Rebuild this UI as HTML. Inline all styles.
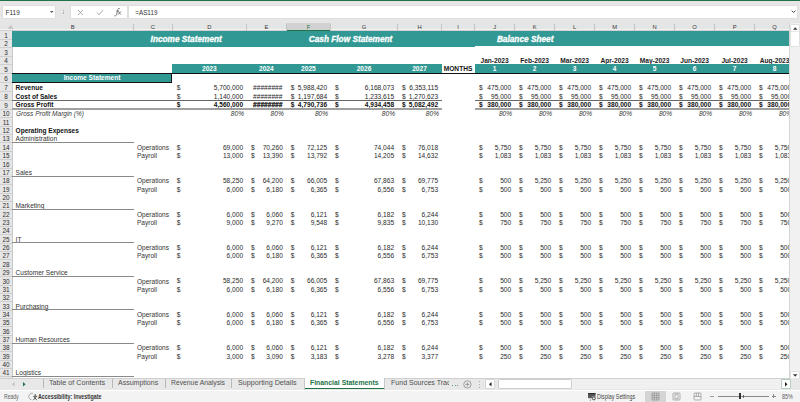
<!DOCTYPE html><html><head><meta charset="utf-8"><style>
html,body{margin:0;padding:0;}
body{width:800px;height:402px;overflow:hidden;position:relative;background:#fff;font-family:"Liberation Sans",sans-serif;color:#262626;}
.t{position:absolute;white-space:nowrap;line-height:10px;}
.r{position:absolute;}
#grid{position:absolute;left:0;top:0;width:789.3px;height:378px;overflow:hidden;}
</style></head><body>
<div class="r" style="left:0.00px;top:0.00px;width:800.00px;height:23.00px;background:#e6e6e6;"></div>
<div class="r" style="left:0.00px;top:0.00px;width:800.00px;height:1.00px;background:#217346;"></div>
<div class="r" style="left:3.00px;top:5.50px;width:52.00px;height:12.70px;background:#fff;border-radius:1px;box-shadow:0 0 0 0.5px #d6d6d6;"></div>
<div class="t" style="top:7.85px;font-size:6.500px;color:#333;left:5.50px;">F119</div>
<svg style="position:absolute;left:49.5px;top:11px" width="4" height="3"><path d="M0 0H3.5L1.75 2Z" fill="#555"/></svg>
<div class="r" style="left:62.70px;top:10.20px;width:0.80px;height:0.70px;background:#b0b0b0;"></div>
<div class="r" style="left:62.70px;top:11.80px;width:0.80px;height:0.70px;background:#b0b0b0;"></div>
<div class="r" style="left:62.70px;top:13.40px;width:0.80px;height:0.70px;background:#b0b0b0;"></div>
<div class="r" style="left:70.60px;top:5.50px;width:56.90px;height:12.50px;background:#fff;box-shadow:0 0 0 0.5px #d6d6d6;"></div>
<svg style="position:absolute;left:77px;top:8.5px" width="7" height="7"><path d="M1 1L6 6M6 1L1 6" stroke="#8a8a8a" stroke-width="0.7"/></svg>
<svg style="position:absolute;left:95.5px;top:8.5px" width="8" height="7"><path d="M1 3.5L3 5.8L7 1" stroke="#8a8a8a" stroke-width="0.7" fill="none"/></svg>
<svg style="position:absolute;left:113px;top:7px" width="10" height="10"><path d="M6.8 1.6C5.8 1 5 1.4 4.7 2.8L3.6 7.6C3.3 8.8 2.4 9.2 1.4 8.7M3.3 4.1H6.2M5.2 4.4L7.8 7.6M8 4.4L5 7.6" stroke="#595959" stroke-width="0.75" fill="none"/></svg>
<div class="r" style="left:129.40px;top:5.50px;width:667.60px;height:12.50px;background:#fff;box-shadow:0 0 0 0.5px #d6d6d6;"></div>
<div class="t" style="top:7.92px;font-size:6.300px;color:#333;left:135.30px;">=AS119</div>
<svg style="position:absolute;left:790.5px;top:10px" width="6" height="4"><path d="M0.7 0.7L2.6 2.5L4.5 0.7" stroke="#444" stroke-width="1" fill="none"/></svg>
<div class="r" style="left:0.00px;top:23.00px;width:790.00px;height:7.70px;background:#e4e5e5;"></div>
<div class="r" style="left:0.00px;top:29.30px;width:790.00px;height:0.90px;background:#f3f1f1;"></div>
<div class="r" style="left:0.00px;top:30.20px;width:790.00px;height:0.50px;background:#d0d0d0;"></div>
<svg style="position:absolute;left:6.5px;top:24px" width="6" height="6"><path d="M4.6 0.8V4.8H0.6Z" fill="#bdbdbd"/></svg>
<div class="r" style="left:286.25px;top:23.00px;width:44.35px;height:7.70px;background:#d2d2d2;"></div>
<div class="r" style="left:286.25px;top:29.80px;width:44.35px;height:0.90px;background:#217346;"></div>
<div class="r" style="left:133.25px;top:24.00px;width:0.50px;height:6.50px;background:#c4c4c4;"></div>
<div class="t" style="top:21.99px;font-size:5.800px;color:#3a3a3a;left:-27.25px;width:200px;text-align:center;">B</div>
<div class="r" style="left:171.95px;top:24.00px;width:0.50px;height:6.50px;background:#c4c4c4;"></div>
<div class="t" style="top:21.99px;font-size:5.800px;color:#3a3a3a;left:52.85px;width:200px;text-align:center;">C</div>
<div class="r" style="left:246.25px;top:24.00px;width:0.50px;height:6.50px;background:#c4c4c4;"></div>
<div class="t" style="top:21.99px;font-size:5.800px;color:#3a3a3a;left:109.35px;width:200px;text-align:center;">D</div>
<div class="r" style="left:286.00px;top:24.00px;width:0.50px;height:6.50px;background:#c4c4c4;"></div>
<div class="t" style="top:21.99px;font-size:5.800px;color:#3a3a3a;left:166.38px;width:200px;text-align:center;">E</div>
<div class="r" style="left:330.35px;top:24.00px;width:0.50px;height:6.50px;background:#c4c4c4;"></div>
<div class="t" style="top:21.99px;font-size:5.800px;color:#217346;left:208.43px;width:200px;text-align:center;">F</div>
<div class="r" style="left:397.25px;top:24.00px;width:0.50px;height:6.50px;background:#c4c4c4;"></div>
<div class="t" style="top:21.99px;font-size:5.800px;color:#3a3a3a;left:264.05px;width:200px;text-align:center;">G</div>
<div class="r" style="left:441.25px;top:24.00px;width:0.50px;height:6.50px;background:#c4c4c4;"></div>
<div class="t" style="top:21.99px;font-size:5.800px;color:#3a3a3a;left:319.50px;width:200px;text-align:center;">H</div>
<div class="r" style="left:474.35px;top:24.00px;width:0.50px;height:6.50px;background:#c4c4c4;"></div>
<div class="t" style="top:21.99px;font-size:5.800px;color:#3a3a3a;left:358.05px;width:200px;text-align:center;">I</div>
<div class="r" style="left:514.35px;top:24.00px;width:0.50px;height:6.50px;background:#c4c4c4;"></div>
<div class="t" style="top:21.99px;font-size:5.800px;color:#3a3a3a;left:394.60px;width:200px;text-align:center;">J</div>
<div class="r" style="left:554.35px;top:24.00px;width:0.50px;height:6.50px;background:#c4c4c4;"></div>
<div class="t" style="top:21.99px;font-size:5.800px;color:#3a3a3a;left:434.60px;width:200px;text-align:center;">K</div>
<div class="r" style="left:594.35px;top:24.00px;width:0.50px;height:6.50px;background:#c4c4c4;"></div>
<div class="t" style="top:21.99px;font-size:5.800px;color:#3a3a3a;left:474.60px;width:200px;text-align:center;">L</div>
<div class="r" style="left:634.35px;top:24.00px;width:0.50px;height:6.50px;background:#c4c4c4;"></div>
<div class="t" style="top:21.99px;font-size:5.800px;color:#3a3a3a;left:514.60px;width:200px;text-align:center;">M</div>
<div class="r" style="left:674.35px;top:24.00px;width:0.50px;height:6.50px;background:#c4c4c4;"></div>
<div class="t" style="top:21.99px;font-size:5.800px;color:#3a3a3a;left:554.60px;width:200px;text-align:center;">N</div>
<div class="r" style="left:714.35px;top:24.00px;width:0.50px;height:6.50px;background:#c4c4c4;"></div>
<div class="t" style="top:21.99px;font-size:5.800px;color:#3a3a3a;left:594.60px;width:200px;text-align:center;">O</div>
<div class="r" style="left:754.35px;top:24.00px;width:0.50px;height:6.50px;background:#c4c4c4;"></div>
<div class="t" style="top:21.99px;font-size:5.800px;color:#3a3a3a;left:634.60px;width:200px;text-align:center;">P</div>
<div class="t" style="top:21.99px;font-size:5.800px;color:#3a3a3a;left:674.60px;width:200px;text-align:center;">Q</div>
<div class="r" style="left:11.75px;top:27.00px;width:0.50px;height:3.70px;background:#d0d0d0;"></div>
<div class="r" style="left:0.00px;top:30.70px;width:12.00px;height:347.10px;background:#e6e6e6;"></div>
<div class="r" style="left:11.60px;top:30.70px;width:0.60px;height:347.10px;background:#c8c8c8;"></div>
<div class="r" style="left:0.00px;top:38.60px;width:12.00px;height:0.50px;background:#cfcfcf;"></div>
<div class="t" style="top:31.23px;font-size:6.400px;color:#2e2e2e;left:-94.00px;width:200px;text-align:center;">1</div>
<div class="r" style="left:0.00px;top:46.75px;width:12.00px;height:0.50px;background:#cfcfcf;"></div>
<div class="t" style="top:39.38px;font-size:6.400px;color:#2e2e2e;left:-94.00px;width:200px;text-align:center;">2</div>
<div class="r" style="left:0.00px;top:55.55px;width:12.00px;height:0.50px;background:#cfcfcf;"></div>
<div class="t" style="top:47.58px;font-size:6.400px;color:#2e2e2e;left:-94.00px;width:200px;text-align:center;">3</div>
<div class="r" style="left:0.00px;top:64.05px;width:12.00px;height:0.50px;background:#cfcfcf;"></div>
<div class="t" style="top:56.08px;font-size:6.400px;color:#2e2e2e;left:-94.00px;width:200px;text-align:center;">4</div>
<div class="r" style="left:0.00px;top:72.95px;width:12.00px;height:0.50px;background:#cfcfcf;"></div>
<div class="t" style="top:64.98px;font-size:6.400px;color:#2e2e2e;left:-94.00px;width:200px;text-align:center;">5</div>
<div class="r" style="left:0.00px;top:82.10px;width:12.00px;height:0.50px;background:#cfcfcf;"></div>
<div class="t" style="top:74.13px;font-size:6.400px;color:#2e2e2e;left:-94.00px;width:200px;text-align:center;">6</div>
<div class="r" style="left:0.00px;top:90.85px;width:12.00px;height:0.50px;background:#cfcfcf;"></div>
<div class="t" style="top:82.88px;font-size:6.400px;color:#2e2e2e;left:-94.00px;width:200px;text-align:center;">7</div>
<div class="r" style="left:0.00px;top:100.05px;width:12.00px;height:0.50px;background:#cfcfcf;"></div>
<div class="t" style="top:92.08px;font-size:6.400px;color:#2e2e2e;left:-94.00px;width:200px;text-align:center;">8</div>
<div class="r" style="left:0.00px;top:108.75px;width:12.00px;height:0.50px;background:#cfcfcf;"></div>
<div class="t" style="top:100.78px;font-size:6.400px;color:#2e2e2e;left:-94.00px;width:200px;text-align:center;">9</div>
<div class="r" style="left:0.00px;top:117.15px;width:12.00px;height:0.50px;background:#cfcfcf;"></div>
<div class="t" style="top:109.18px;font-size:6.400px;color:#2e2e2e;left:-94.00px;width:200px;text-align:center;">10</div>
<div class="r" style="left:0.00px;top:125.55px;width:12.00px;height:0.50px;background:#cfcfcf;"></div>
<div class="t" style="top:117.58px;font-size:6.400px;color:#2e2e2e;left:-94.00px;width:200px;text-align:center;">11</div>
<div class="r" style="left:0.00px;top:133.95px;width:12.00px;height:0.50px;background:#cfcfcf;"></div>
<div class="t" style="top:125.98px;font-size:6.400px;color:#2e2e2e;left:-94.00px;width:200px;text-align:center;">12</div>
<div class="r" style="left:0.00px;top:142.45px;width:12.00px;height:0.50px;background:#cfcfcf;"></div>
<div class="t" style="top:134.48px;font-size:6.400px;color:#2e2e2e;left:-94.00px;width:200px;text-align:center;">13</div>
<div class="r" style="left:0.00px;top:150.81px;width:12.00px;height:0.50px;background:#cfcfcf;"></div>
<div class="t" style="top:142.84px;font-size:6.400px;color:#2e2e2e;left:-94.00px;width:200px;text-align:center;">14</div>
<div class="r" style="left:0.00px;top:159.16px;width:12.00px;height:0.50px;background:#cfcfcf;"></div>
<div class="t" style="top:151.20px;font-size:6.400px;color:#2e2e2e;left:-94.00px;width:200px;text-align:center;">15</div>
<div class="r" style="left:0.00px;top:167.52px;width:12.00px;height:0.50px;background:#cfcfcf;"></div>
<div class="t" style="top:159.55px;font-size:6.400px;color:#2e2e2e;left:-94.00px;width:200px;text-align:center;">16</div>
<div class="r" style="left:0.00px;top:175.88px;width:12.00px;height:0.50px;background:#cfcfcf;"></div>
<div class="t" style="top:167.91px;font-size:6.400px;color:#2e2e2e;left:-94.00px;width:200px;text-align:center;">17</div>
<div class="r" style="left:0.00px;top:184.23px;width:12.00px;height:0.50px;background:#cfcfcf;"></div>
<div class="t" style="top:176.27px;font-size:6.400px;color:#2e2e2e;left:-94.00px;width:200px;text-align:center;">18</div>
<div class="r" style="left:0.00px;top:192.59px;width:12.00px;height:0.50px;background:#cfcfcf;"></div>
<div class="t" style="top:184.62px;font-size:6.400px;color:#2e2e2e;left:-94.00px;width:200px;text-align:center;">19</div>
<div class="r" style="left:0.00px;top:200.95px;width:12.00px;height:0.50px;background:#cfcfcf;"></div>
<div class="t" style="top:192.98px;font-size:6.400px;color:#2e2e2e;left:-94.00px;width:200px;text-align:center;">20</div>
<div class="r" style="left:0.00px;top:209.31px;width:12.00px;height:0.50px;background:#cfcfcf;"></div>
<div class="t" style="top:201.34px;font-size:6.400px;color:#2e2e2e;left:-94.00px;width:200px;text-align:center;">21</div>
<div class="r" style="left:0.00px;top:217.66px;width:12.00px;height:0.50px;background:#cfcfcf;"></div>
<div class="t" style="top:209.70px;font-size:6.400px;color:#2e2e2e;left:-94.00px;width:200px;text-align:center;">22</div>
<div class="r" style="left:0.00px;top:226.02px;width:12.00px;height:0.50px;background:#cfcfcf;"></div>
<div class="t" style="top:218.05px;font-size:6.400px;color:#2e2e2e;left:-94.00px;width:200px;text-align:center;">23</div>
<div class="r" style="left:0.00px;top:234.38px;width:12.00px;height:0.50px;background:#cfcfcf;"></div>
<div class="t" style="top:226.41px;font-size:6.400px;color:#2e2e2e;left:-94.00px;width:200px;text-align:center;">24</div>
<div class="r" style="left:0.00px;top:242.73px;width:12.00px;height:0.50px;background:#cfcfcf;"></div>
<div class="t" style="top:234.77px;font-size:6.400px;color:#2e2e2e;left:-94.00px;width:200px;text-align:center;">25</div>
<div class="r" style="left:0.00px;top:251.09px;width:12.00px;height:0.50px;background:#cfcfcf;"></div>
<div class="t" style="top:243.12px;font-size:6.400px;color:#2e2e2e;left:-94.00px;width:200px;text-align:center;">26</div>
<div class="r" style="left:0.00px;top:259.45px;width:12.00px;height:0.50px;background:#cfcfcf;"></div>
<div class="t" style="top:251.48px;font-size:6.400px;color:#2e2e2e;left:-94.00px;width:200px;text-align:center;">27</div>
<div class="r" style="left:0.00px;top:267.80px;width:12.00px;height:0.50px;background:#cfcfcf;"></div>
<div class="t" style="top:259.84px;font-size:6.400px;color:#2e2e2e;left:-94.00px;width:200px;text-align:center;">28</div>
<div class="r" style="left:0.00px;top:276.16px;width:12.00px;height:0.50px;background:#cfcfcf;"></div>
<div class="t" style="top:268.19px;font-size:6.400px;color:#2e2e2e;left:-94.00px;width:200px;text-align:center;">29</div>
<div class="r" style="left:0.00px;top:284.52px;width:12.00px;height:0.50px;background:#cfcfcf;"></div>
<div class="t" style="top:276.55px;font-size:6.400px;color:#2e2e2e;left:-94.00px;width:200px;text-align:center;">30</div>
<div class="r" style="left:0.00px;top:292.88px;width:12.00px;height:0.50px;background:#cfcfcf;"></div>
<div class="t" style="top:284.91px;font-size:6.400px;color:#2e2e2e;left:-94.00px;width:200px;text-align:center;">31</div>
<div class="r" style="left:0.00px;top:301.23px;width:12.00px;height:0.50px;background:#cfcfcf;"></div>
<div class="t" style="top:293.27px;font-size:6.400px;color:#2e2e2e;left:-94.00px;width:200px;text-align:center;">32</div>
<div class="r" style="left:0.00px;top:309.59px;width:12.00px;height:0.50px;background:#cfcfcf;"></div>
<div class="t" style="top:301.62px;font-size:6.400px;color:#2e2e2e;left:-94.00px;width:200px;text-align:center;">33</div>
<div class="r" style="left:0.00px;top:317.95px;width:12.00px;height:0.50px;background:#cfcfcf;"></div>
<div class="t" style="top:309.98px;font-size:6.400px;color:#2e2e2e;left:-94.00px;width:200px;text-align:center;">34</div>
<div class="r" style="left:0.00px;top:326.30px;width:12.00px;height:0.50px;background:#cfcfcf;"></div>
<div class="t" style="top:318.34px;font-size:6.400px;color:#2e2e2e;left:-94.00px;width:200px;text-align:center;">35</div>
<div class="r" style="left:0.00px;top:334.66px;width:12.00px;height:0.50px;background:#cfcfcf;"></div>
<div class="t" style="top:326.69px;font-size:6.400px;color:#2e2e2e;left:-94.00px;width:200px;text-align:center;">36</div>
<div class="r" style="left:0.00px;top:343.02px;width:12.00px;height:0.50px;background:#cfcfcf;"></div>
<div class="t" style="top:335.05px;font-size:6.400px;color:#2e2e2e;left:-94.00px;width:200px;text-align:center;">37</div>
<div class="r" style="left:0.00px;top:351.38px;width:12.00px;height:0.50px;background:#cfcfcf;"></div>
<div class="t" style="top:343.41px;font-size:6.400px;color:#2e2e2e;left:-94.00px;width:200px;text-align:center;">38</div>
<div class="r" style="left:0.00px;top:359.73px;width:12.00px;height:0.50px;background:#cfcfcf;"></div>
<div class="t" style="top:351.76px;font-size:6.400px;color:#2e2e2e;left:-94.00px;width:200px;text-align:center;">39</div>
<div class="r" style="left:0.00px;top:368.09px;width:12.00px;height:0.50px;background:#cfcfcf;"></div>
<div class="t" style="top:360.12px;font-size:6.400px;color:#2e2e2e;left:-94.00px;width:200px;text-align:center;">40</div>
<div class="r" style="left:0.00px;top:376.45px;width:12.00px;height:0.50px;background:#cfcfcf;"></div>
<div class="t" style="top:368.48px;font-size:6.400px;color:#2e2e2e;left:-94.00px;width:200px;text-align:center;">41</div>
<div id="grid">
<div class="r" style="left:12.00px;top:30.70px;width:462.60px;height:16.30px;background:#329894;"></div>
<div class="r" style="left:474.60px;top:30.70px;width:314.90px;height:15.60px;background:#329894;"></div>
<div class="t" style="top:34.63px;font-size:8.280px;font-weight:bold;font-style:italic;color:#fff;left:150.60px;-webkit-text-stroke:0.3px #fff;">Income Statement</div>
<div class="t" style="top:34.63px;font-size:8.280px;font-weight:bold;font-style:italic;color:#fff;left:308.75px;-webkit-text-stroke:0.3px #fff;">Cash Flow Statement</div>
<div class="t" style="top:34.63px;font-size:8.280px;font-weight:bold;font-style:italic;color:#fff;left:496.90px;-webkit-text-stroke:0.3px #fff;">Balance Sheet</div>
<div class="t" style="top:55.61px;font-size:6.600px;font-weight:bold;color:#1a1a1a;left:394.60px;width:200px;text-align:center;">Jan-2023</div>
<div class="t" style="top:55.61px;font-size:6.600px;font-weight:bold;color:#1a1a1a;left:434.60px;width:200px;text-align:center;">Feb-2023</div>
<div class="t" style="top:55.61px;font-size:6.600px;font-weight:bold;color:#1a1a1a;left:474.60px;width:200px;text-align:center;">Mar-2023</div>
<div class="t" style="top:55.61px;font-size:6.600px;font-weight:bold;color:#1a1a1a;left:514.60px;width:200px;text-align:center;">Apr-2023</div>
<div class="t" style="top:55.61px;font-size:6.600px;font-weight:bold;color:#1a1a1a;left:554.60px;width:200px;text-align:center;">May-2023</div>
<div class="t" style="top:55.61px;font-size:6.600px;font-weight:bold;color:#1a1a1a;left:594.60px;width:200px;text-align:center;">Jun-2023</div>
<div class="t" style="top:55.61px;font-size:6.600px;font-weight:bold;color:#1a1a1a;left:634.60px;width:200px;text-align:center;">Jul-2023</div>
<div class="t" style="top:55.61px;font-size:6.600px;font-weight:bold;color:#1a1a1a;left:674.60px;width:200px;text-align:center;">Aug-2023</div>
<div class="r" style="left:172.20px;top:64.30px;width:617.30px;height:8.70px;background:#329894;"></div>
<div class="r" style="left:441.50px;top:64.30px;width:33.10px;height:8.70px;background:#fff;"></div>
<div class="r" style="left:172.20px;top:72.80px;width:617.30px;height:1.20px;background:#111;"></div>
<div class="t" style="top:63.71px;font-size:6.600px;font-weight:bold;color:#fff;left:109.35px;width:200px;text-align:center;">2023</div>
<div class="t" style="top:63.71px;font-size:6.600px;font-weight:bold;color:#fff;left:166.38px;width:200px;text-align:center;">2024</div>
<div class="t" style="top:63.71px;font-size:6.600px;font-weight:bold;color:#fff;left:208.43px;width:200px;text-align:center;">2025</div>
<div class="t" style="top:63.71px;font-size:6.600px;font-weight:bold;color:#fff;left:264.05px;width:200px;text-align:center;">2026</div>
<div class="t" style="top:63.71px;font-size:6.600px;font-weight:bold;color:#fff;left:319.50px;width:200px;text-align:center;">2027</div>
<div class="t" style="top:63.71px;font-size:6.600px;font-weight:bold;color:#111;left:358.05px;width:200px;text-align:center;">MONTHS</div>
<div class="t" style="top:63.71px;font-size:6.600px;font-weight:bold;color:#fff;left:394.60px;width:200px;text-align:center;">1</div>
<div class="t" style="top:63.71px;font-size:6.600px;font-weight:bold;color:#fff;left:434.60px;width:200px;text-align:center;">2</div>
<div class="t" style="top:63.71px;font-size:6.600px;font-weight:bold;color:#fff;left:474.60px;width:200px;text-align:center;">3</div>
<div class="t" style="top:63.71px;font-size:6.600px;font-weight:bold;color:#fff;left:514.60px;width:200px;text-align:center;">4</div>
<div class="t" style="top:63.71px;font-size:6.600px;font-weight:bold;color:#fff;left:554.60px;width:200px;text-align:center;">5</div>
<div class="t" style="top:63.71px;font-size:6.600px;font-weight:bold;color:#fff;left:594.60px;width:200px;text-align:center;">6</div>
<div class="t" style="top:63.71px;font-size:6.600px;font-weight:bold;color:#fff;left:634.60px;width:200px;text-align:center;">7</div>
<div class="t" style="top:63.71px;font-size:6.600px;font-weight:bold;color:#fff;left:674.60px;width:200px;text-align:center;">8</div>
<div class="r" style="left:12.00px;top:73.20px;width:160.20px;height:9.40px;background:#111;"></div>
<div class="r" style="left:12.00px;top:74.00px;width:159.40px;height:7.80px;background:#329894;"></div>
<div class="t" style="top:73.11px;font-size:6.600px;font-weight:bold;color:#fff;left:-7.90px;width:200px;text-align:center;">Income Statement</div>
<div class="t" style="top:82.73px;font-size:6.550px;font-weight:bold;color:#111;left:15.60px;">Revenue</div>
<div class="t" style="top:82.71px;font-size:6.600px;left:176.70px;">$</div>
<div class="t" style="top:82.71px;font-size:6.600px;left:43.10px;width:200px;text-align:right;">5,700,000</div>
<div class="t" style="top:82.71px;font-size:6.600px;left:253.10px;">########</div>
<div class="t" style="top:82.71px;font-size:6.600px;left:290.75px;">$</div>
<div class="t" style="top:82.71px;font-size:6.600px;left:127.20px;width:200px;text-align:right;">5,988,420</div>
<div class="t" style="top:82.71px;font-size:6.600px;left:335.10px;">$</div>
<div class="t" style="top:82.71px;font-size:6.600px;left:194.10px;width:200px;text-align:right;">6,168,073</div>
<div class="t" style="top:82.71px;font-size:6.600px;left:402.00px;">$</div>
<div class="t" style="top:82.71px;font-size:6.600px;left:238.10px;width:200px;text-align:right;">6,353,115</div>
<div class="t" style="top:82.71px;font-size:6.600px;left:479.10px;">$</div>
<div class="t" style="top:82.71px;font-size:6.600px;left:311.20px;width:200px;text-align:right;">475,000</div>
<div class="t" style="top:82.71px;font-size:6.600px;left:519.10px;">$</div>
<div class="t" style="top:82.71px;font-size:6.600px;left:351.20px;width:200px;text-align:right;">475,000</div>
<div class="t" style="top:82.71px;font-size:6.600px;left:559.10px;">$</div>
<div class="t" style="top:82.71px;font-size:6.600px;left:391.20px;width:200px;text-align:right;">475,000</div>
<div class="t" style="top:82.71px;font-size:6.600px;left:599.10px;">$</div>
<div class="t" style="top:82.71px;font-size:6.600px;left:431.20px;width:200px;text-align:right;">475,000</div>
<div class="t" style="top:82.71px;font-size:6.600px;left:639.10px;">$</div>
<div class="t" style="top:82.71px;font-size:6.600px;left:471.20px;width:200px;text-align:right;">475,000</div>
<div class="t" style="top:82.71px;font-size:6.600px;left:679.10px;">$</div>
<div class="t" style="top:82.71px;font-size:6.600px;left:511.20px;width:200px;text-align:right;">475,000</div>
<div class="t" style="top:82.71px;font-size:6.600px;left:719.10px;">$</div>
<div class="t" style="top:82.71px;font-size:6.600px;left:551.20px;width:200px;text-align:right;">475,000</div>
<div class="t" style="top:82.71px;font-size:6.600px;left:759.10px;">$</div>
<div class="t" style="top:82.71px;font-size:6.600px;left:591.20px;width:200px;text-align:right;">475,000</div>
<div class="t" style="top:91.93px;font-size:6.550px;font-weight:bold;color:#111;left:15.60px;">Cost of Sales</div>
<div class="t" style="top:91.91px;font-size:6.600px;left:176.70px;">$</div>
<div class="t" style="top:91.91px;font-size:6.600px;left:43.10px;width:200px;text-align:right;">1,140,000</div>
<div class="t" style="top:91.91px;font-size:6.600px;left:253.10px;">########</div>
<div class="t" style="top:91.91px;font-size:6.600px;left:290.75px;">$</div>
<div class="t" style="top:91.91px;font-size:6.600px;left:127.20px;width:200px;text-align:right;">1,197,684</div>
<div class="t" style="top:91.91px;font-size:6.600px;left:335.10px;">$</div>
<div class="t" style="top:91.91px;font-size:6.600px;left:194.10px;width:200px;text-align:right;">1,233,615</div>
<div class="t" style="top:91.91px;font-size:6.600px;left:402.00px;">$</div>
<div class="t" style="top:91.91px;font-size:6.600px;left:238.10px;width:200px;text-align:right;">1,270,623</div>
<div class="t" style="top:91.91px;font-size:6.600px;left:479.10px;">$</div>
<div class="t" style="top:91.91px;font-size:6.600px;left:311.20px;width:200px;text-align:right;">95,000</div>
<div class="t" style="top:91.91px;font-size:6.600px;left:519.10px;">$</div>
<div class="t" style="top:91.91px;font-size:6.600px;left:351.20px;width:200px;text-align:right;">95,000</div>
<div class="t" style="top:91.91px;font-size:6.600px;left:559.10px;">$</div>
<div class="t" style="top:91.91px;font-size:6.600px;left:391.20px;width:200px;text-align:right;">95,000</div>
<div class="t" style="top:91.91px;font-size:6.600px;left:599.10px;">$</div>
<div class="t" style="top:91.91px;font-size:6.600px;left:431.20px;width:200px;text-align:right;">95,000</div>
<div class="t" style="top:91.91px;font-size:6.600px;left:639.10px;">$</div>
<div class="t" style="top:91.91px;font-size:6.600px;left:471.20px;width:200px;text-align:right;">95,000</div>
<div class="t" style="top:91.91px;font-size:6.600px;left:679.10px;">$</div>
<div class="t" style="top:91.91px;font-size:6.600px;left:511.20px;width:200px;text-align:right;">95,000</div>
<div class="t" style="top:91.91px;font-size:6.600px;left:719.10px;">$</div>
<div class="t" style="top:91.91px;font-size:6.600px;left:551.20px;width:200px;text-align:right;">95,000</div>
<div class="t" style="top:91.91px;font-size:6.600px;left:759.10px;">$</div>
<div class="t" style="top:91.91px;font-size:6.600px;left:591.20px;width:200px;text-align:right;">95,000</div>
<div class="r" style="left:12.00px;top:100.00px;width:429.80px;height:0.80px;background:#666;"></div>
<div class="r" style="left:474.60px;top:100.00px;width:314.90px;height:0.80px;background:#666;"></div>
<div class="r" style="left:12.00px;top:108.30px;width:429.80px;height:1.30px;background:#a0a0a0;"></div>
<div class="r" style="left:474.60px;top:108.30px;width:314.90px;height:1.30px;background:#a0a0a0;"></div>
<div class="t" style="top:99.73px;font-size:6.550px;font-weight:bold;color:#111;left:15.60px;">Gross Profit</div>
<div class="t" style="top:99.71px;font-size:6.600px;font-weight:bold;color:#111;left:176.70px;">$</div>
<div class="t" style="top:99.71px;font-size:6.600px;font-weight:bold;color:#111;left:43.10px;width:200px;text-align:right;">4,560,000</div>
<div class="t" style="top:99.71px;font-size:6.600px;font-weight:bold;color:#111;left:253.10px;-webkit-text-stroke:0.25px #111;">########</div>
<div class="t" style="top:99.71px;font-size:6.600px;font-weight:bold;color:#111;left:290.75px;">$</div>
<div class="t" style="top:99.71px;font-size:6.600px;font-weight:bold;color:#111;left:127.20px;width:200px;text-align:right;">4,790,736</div>
<div class="t" style="top:99.71px;font-size:6.600px;font-weight:bold;color:#111;left:335.10px;">$</div>
<div class="t" style="top:99.71px;font-size:6.600px;font-weight:bold;color:#111;left:194.10px;width:200px;text-align:right;">4,934,458</div>
<div class="t" style="top:99.71px;font-size:6.600px;font-weight:bold;color:#111;left:402.00px;">$</div>
<div class="t" style="top:99.71px;font-size:6.600px;font-weight:bold;color:#111;left:238.10px;width:200px;text-align:right;">5,082,492</div>
<div class="t" style="top:99.71px;font-size:6.600px;font-weight:bold;color:#111;left:479.10px;">$</div>
<div class="t" style="top:99.71px;font-size:6.600px;font-weight:bold;color:#111;left:311.20px;width:200px;text-align:right;">380,000</div>
<div class="t" style="top:99.71px;font-size:6.600px;font-weight:bold;color:#111;left:519.10px;">$</div>
<div class="t" style="top:99.71px;font-size:6.600px;font-weight:bold;color:#111;left:351.20px;width:200px;text-align:right;">380,000</div>
<div class="t" style="top:99.71px;font-size:6.600px;font-weight:bold;color:#111;left:559.10px;">$</div>
<div class="t" style="top:99.71px;font-size:6.600px;font-weight:bold;color:#111;left:391.20px;width:200px;text-align:right;">380,000</div>
<div class="t" style="top:99.71px;font-size:6.600px;font-weight:bold;color:#111;left:599.10px;">$</div>
<div class="t" style="top:99.71px;font-size:6.600px;font-weight:bold;color:#111;left:431.20px;width:200px;text-align:right;">380,000</div>
<div class="t" style="top:99.71px;font-size:6.600px;font-weight:bold;color:#111;left:639.10px;">$</div>
<div class="t" style="top:99.71px;font-size:6.600px;font-weight:bold;color:#111;left:471.20px;width:200px;text-align:right;">380,000</div>
<div class="t" style="top:99.71px;font-size:6.600px;font-weight:bold;color:#111;left:679.10px;">$</div>
<div class="t" style="top:99.71px;font-size:6.600px;font-weight:bold;color:#111;left:511.20px;width:200px;text-align:right;">380,000</div>
<div class="t" style="top:99.71px;font-size:6.600px;font-weight:bold;color:#111;left:719.10px;">$</div>
<div class="t" style="top:99.71px;font-size:6.600px;font-weight:bold;color:#111;left:551.20px;width:200px;text-align:right;">380,000</div>
<div class="t" style="top:99.71px;font-size:6.600px;font-weight:bold;color:#111;left:759.10px;">$</div>
<div class="t" style="top:99.71px;font-size:6.600px;font-weight:bold;color:#111;left:591.20px;width:200px;text-align:right;">380,000</div>
<div class="t" style="top:109.04px;font-size:6.510px;font-style:italic;color:#3a3a3a;left:16.00px;">Gross Profit Margin (%)</div>
<div class="t" style="top:109.01px;font-size:6.600px;font-style:italic;color:#333;left:44.00px;width:200px;text-align:right;">80%</div>
<div class="t" style="top:109.01px;font-size:6.600px;font-style:italic;color:#333;left:83.75px;width:200px;text-align:right;">80%</div>
<div class="t" style="top:109.01px;font-size:6.600px;font-style:italic;color:#333;left:128.10px;width:200px;text-align:right;">80%</div>
<div class="t" style="top:109.01px;font-size:6.600px;font-style:italic;color:#333;left:195.00px;width:200px;text-align:right;">80%</div>
<div class="t" style="top:109.01px;font-size:6.600px;font-style:italic;color:#333;left:239.00px;width:200px;text-align:right;">80%</div>
<div class="t" style="top:109.01px;font-size:6.600px;font-style:italic;color:#333;left:312.10px;width:200px;text-align:right;">80%</div>
<div class="t" style="top:109.01px;font-size:6.600px;font-style:italic;color:#333;left:352.10px;width:200px;text-align:right;">80%</div>
<div class="t" style="top:109.01px;font-size:6.600px;font-style:italic;color:#333;left:392.10px;width:200px;text-align:right;">80%</div>
<div class="t" style="top:109.01px;font-size:6.600px;font-style:italic;color:#333;left:432.10px;width:200px;text-align:right;">80%</div>
<div class="t" style="top:109.01px;font-size:6.600px;font-style:italic;color:#333;left:472.10px;width:200px;text-align:right;">80%</div>
<div class="t" style="top:109.01px;font-size:6.600px;font-style:italic;color:#333;left:512.10px;width:200px;text-align:right;">80%</div>
<div class="t" style="top:109.01px;font-size:6.600px;font-style:italic;color:#333;left:552.10px;width:200px;text-align:right;">80%</div>
<div class="t" style="top:109.01px;font-size:6.600px;font-style:italic;color:#333;left:592.10px;width:200px;text-align:right;">80%</div>
<div class="t" style="top:125.83px;font-size:6.550px;font-weight:bold;color:#111;left:15.60px;">Operating Expenses</div>
<div class="t" style="top:134.43px;font-size:6.550px;color:#333;left:15.60px;">Administration</div>
<div class="r" style="left:12.00px;top:142.20px;width:121.50px;height:0.90px;background:#8a8a8a;"></div>
<div class="t" style="top:142.79px;font-size:6.550px;color:#333;left:137.00px;">Operations</div>
<div class="t" style="top:142.77px;font-size:6.600px;color:#2a2a2a;left:176.70px;">$</div>
<div class="t" style="top:142.77px;font-size:6.600px;color:#2a2a2a;left:43.10px;width:200px;text-align:right;">69,000</div>
<div class="t" style="top:142.77px;font-size:6.600px;color:#2a2a2a;left:251.00px;">$</div>
<div class="t" style="top:142.77px;font-size:6.600px;color:#2a2a2a;left:82.85px;width:200px;text-align:right;">70,260</div>
<div class="t" style="top:142.77px;font-size:6.600px;color:#2a2a2a;left:290.75px;">$</div>
<div class="t" style="top:142.77px;font-size:6.600px;color:#2a2a2a;left:127.20px;width:200px;text-align:right;">72,125</div>
<div class="t" style="top:142.77px;font-size:6.600px;color:#2a2a2a;left:335.10px;">$</div>
<div class="t" style="top:142.77px;font-size:6.600px;color:#2a2a2a;left:194.10px;width:200px;text-align:right;">74,044</div>
<div class="t" style="top:142.77px;font-size:6.600px;color:#2a2a2a;left:402.00px;">$</div>
<div class="t" style="top:142.77px;font-size:6.600px;color:#2a2a2a;left:238.10px;width:200px;text-align:right;">76,018</div>
<div class="t" style="top:142.77px;font-size:6.600px;color:#2a2a2a;left:479.10px;">$</div>
<div class="t" style="top:142.77px;font-size:6.600px;color:#2a2a2a;left:311.20px;width:200px;text-align:right;">5,750</div>
<div class="t" style="top:142.77px;font-size:6.600px;color:#2a2a2a;left:519.10px;">$</div>
<div class="t" style="top:142.77px;font-size:6.600px;color:#2a2a2a;left:351.20px;width:200px;text-align:right;">5,750</div>
<div class="t" style="top:142.77px;font-size:6.600px;color:#2a2a2a;left:559.10px;">$</div>
<div class="t" style="top:142.77px;font-size:6.600px;color:#2a2a2a;left:391.20px;width:200px;text-align:right;">5,750</div>
<div class="t" style="top:142.77px;font-size:6.600px;color:#2a2a2a;left:599.10px;">$</div>
<div class="t" style="top:142.77px;font-size:6.600px;color:#2a2a2a;left:431.20px;width:200px;text-align:right;">5,750</div>
<div class="t" style="top:142.77px;font-size:6.600px;color:#2a2a2a;left:639.10px;">$</div>
<div class="t" style="top:142.77px;font-size:6.600px;color:#2a2a2a;left:471.20px;width:200px;text-align:right;">5,750</div>
<div class="t" style="top:142.77px;font-size:6.600px;color:#2a2a2a;left:679.10px;">$</div>
<div class="t" style="top:142.77px;font-size:6.600px;color:#2a2a2a;left:511.20px;width:200px;text-align:right;">5,750</div>
<div class="t" style="top:142.77px;font-size:6.600px;color:#2a2a2a;left:719.10px;">$</div>
<div class="t" style="top:142.77px;font-size:6.600px;color:#2a2a2a;left:551.20px;width:200px;text-align:right;">5,750</div>
<div class="t" style="top:142.77px;font-size:6.600px;color:#2a2a2a;left:759.10px;">$</div>
<div class="t" style="top:142.77px;font-size:6.600px;color:#2a2a2a;left:591.20px;width:200px;text-align:right;">5,750</div>
<div class="t" style="top:151.14px;font-size:6.550px;color:#333;left:137.00px;">Payroll</div>
<div class="t" style="top:151.13px;font-size:6.600px;color:#2a2a2a;left:176.70px;">$</div>
<div class="t" style="top:151.13px;font-size:6.600px;color:#2a2a2a;left:43.10px;width:200px;text-align:right;">13,000</div>
<div class="t" style="top:151.13px;font-size:6.600px;color:#2a2a2a;left:251.00px;">$</div>
<div class="t" style="top:151.13px;font-size:6.600px;color:#2a2a2a;left:82.85px;width:200px;text-align:right;">13,390</div>
<div class="t" style="top:151.13px;font-size:6.600px;color:#2a2a2a;left:290.75px;">$</div>
<div class="t" style="top:151.13px;font-size:6.600px;color:#2a2a2a;left:127.20px;width:200px;text-align:right;">13,792</div>
<div class="t" style="top:151.13px;font-size:6.600px;color:#2a2a2a;left:335.10px;">$</div>
<div class="t" style="top:151.13px;font-size:6.600px;color:#2a2a2a;left:194.10px;width:200px;text-align:right;">14,205</div>
<div class="t" style="top:151.13px;font-size:6.600px;color:#2a2a2a;left:402.00px;">$</div>
<div class="t" style="top:151.13px;font-size:6.600px;color:#2a2a2a;left:238.10px;width:200px;text-align:right;">14,632</div>
<div class="t" style="top:151.13px;font-size:6.600px;color:#2a2a2a;left:479.10px;">$</div>
<div class="t" style="top:151.13px;font-size:6.600px;color:#2a2a2a;left:311.20px;width:200px;text-align:right;">1,083</div>
<div class="t" style="top:151.13px;font-size:6.600px;color:#2a2a2a;left:519.10px;">$</div>
<div class="t" style="top:151.13px;font-size:6.600px;color:#2a2a2a;left:351.20px;width:200px;text-align:right;">1,083</div>
<div class="t" style="top:151.13px;font-size:6.600px;color:#2a2a2a;left:559.10px;">$</div>
<div class="t" style="top:151.13px;font-size:6.600px;color:#2a2a2a;left:391.20px;width:200px;text-align:right;">1,083</div>
<div class="t" style="top:151.13px;font-size:6.600px;color:#2a2a2a;left:599.10px;">$</div>
<div class="t" style="top:151.13px;font-size:6.600px;color:#2a2a2a;left:431.20px;width:200px;text-align:right;">1,083</div>
<div class="t" style="top:151.13px;font-size:6.600px;color:#2a2a2a;left:639.10px;">$</div>
<div class="t" style="top:151.13px;font-size:6.600px;color:#2a2a2a;left:471.20px;width:200px;text-align:right;">1,083</div>
<div class="t" style="top:151.13px;font-size:6.600px;color:#2a2a2a;left:679.10px;">$</div>
<div class="t" style="top:151.13px;font-size:6.600px;color:#2a2a2a;left:511.20px;width:200px;text-align:right;">1,083</div>
<div class="t" style="top:151.13px;font-size:6.600px;color:#2a2a2a;left:719.10px;">$</div>
<div class="t" style="top:151.13px;font-size:6.600px;color:#2a2a2a;left:551.20px;width:200px;text-align:right;">1,083</div>
<div class="t" style="top:151.13px;font-size:6.600px;color:#2a2a2a;left:759.10px;">$</div>
<div class="t" style="top:151.13px;font-size:6.600px;color:#2a2a2a;left:591.20px;width:200px;text-align:right;">1,083</div>
<div class="t" style="top:167.86px;font-size:6.550px;color:#333;left:15.60px;">Sales</div>
<div class="r" style="left:12.00px;top:175.63px;width:121.50px;height:0.90px;background:#8a8a8a;"></div>
<div class="t" style="top:176.22px;font-size:6.550px;color:#333;left:137.00px;">Operations</div>
<div class="t" style="top:176.20px;font-size:6.600px;color:#2a2a2a;left:176.70px;">$</div>
<div class="t" style="top:176.20px;font-size:6.600px;color:#2a2a2a;left:43.10px;width:200px;text-align:right;">58,250</div>
<div class="t" style="top:176.20px;font-size:6.600px;color:#2a2a2a;left:251.00px;">$</div>
<div class="t" style="top:176.20px;font-size:6.600px;color:#2a2a2a;left:82.85px;width:200px;text-align:right;">64,200</div>
<div class="t" style="top:176.20px;font-size:6.600px;color:#2a2a2a;left:290.75px;">$</div>
<div class="t" style="top:176.20px;font-size:6.600px;color:#2a2a2a;left:127.20px;width:200px;text-align:right;">66,005</div>
<div class="t" style="top:176.20px;font-size:6.600px;color:#2a2a2a;left:335.10px;">$</div>
<div class="t" style="top:176.20px;font-size:6.600px;color:#2a2a2a;left:194.10px;width:200px;text-align:right;">67,863</div>
<div class="t" style="top:176.20px;font-size:6.600px;color:#2a2a2a;left:402.00px;">$</div>
<div class="t" style="top:176.20px;font-size:6.600px;color:#2a2a2a;left:238.10px;width:200px;text-align:right;">69,775</div>
<div class="t" style="top:176.20px;font-size:6.600px;color:#2a2a2a;left:479.10px;">$</div>
<div class="t" style="top:176.20px;font-size:6.600px;color:#2a2a2a;left:311.20px;width:200px;text-align:right;">500</div>
<div class="t" style="top:176.20px;font-size:6.600px;color:#2a2a2a;left:519.10px;">$</div>
<div class="t" style="top:176.20px;font-size:6.600px;color:#2a2a2a;left:351.20px;width:200px;text-align:right;">5,250</div>
<div class="t" style="top:176.20px;font-size:6.600px;color:#2a2a2a;left:559.10px;">$</div>
<div class="t" style="top:176.20px;font-size:6.600px;color:#2a2a2a;left:391.20px;width:200px;text-align:right;">5,250</div>
<div class="t" style="top:176.20px;font-size:6.600px;color:#2a2a2a;left:599.10px;">$</div>
<div class="t" style="top:176.20px;font-size:6.600px;color:#2a2a2a;left:431.20px;width:200px;text-align:right;">5,250</div>
<div class="t" style="top:176.20px;font-size:6.600px;color:#2a2a2a;left:639.10px;">$</div>
<div class="t" style="top:176.20px;font-size:6.600px;color:#2a2a2a;left:471.20px;width:200px;text-align:right;">5,250</div>
<div class="t" style="top:176.20px;font-size:6.600px;color:#2a2a2a;left:679.10px;">$</div>
<div class="t" style="top:176.20px;font-size:6.600px;color:#2a2a2a;left:511.20px;width:200px;text-align:right;">5,250</div>
<div class="t" style="top:176.20px;font-size:6.600px;color:#2a2a2a;left:719.10px;">$</div>
<div class="t" style="top:176.20px;font-size:6.600px;color:#2a2a2a;left:551.20px;width:200px;text-align:right;">5,250</div>
<div class="t" style="top:176.20px;font-size:6.600px;color:#2a2a2a;left:759.10px;">$</div>
<div class="t" style="top:176.20px;font-size:6.600px;color:#2a2a2a;left:591.20px;width:200px;text-align:right;">5,250</div>
<div class="t" style="top:184.57px;font-size:6.550px;color:#333;left:137.00px;">Payroll</div>
<div class="t" style="top:184.56px;font-size:6.600px;color:#2a2a2a;left:176.70px;">$</div>
<div class="t" style="top:184.56px;font-size:6.600px;color:#2a2a2a;left:43.10px;width:200px;text-align:right;">6,000</div>
<div class="t" style="top:184.56px;font-size:6.600px;color:#2a2a2a;left:251.00px;">$</div>
<div class="t" style="top:184.56px;font-size:6.600px;color:#2a2a2a;left:82.85px;width:200px;text-align:right;">6,180</div>
<div class="t" style="top:184.56px;font-size:6.600px;color:#2a2a2a;left:290.75px;">$</div>
<div class="t" style="top:184.56px;font-size:6.600px;color:#2a2a2a;left:127.20px;width:200px;text-align:right;">6,365</div>
<div class="t" style="top:184.56px;font-size:6.600px;color:#2a2a2a;left:335.10px;">$</div>
<div class="t" style="top:184.56px;font-size:6.600px;color:#2a2a2a;left:194.10px;width:200px;text-align:right;">6,556</div>
<div class="t" style="top:184.56px;font-size:6.600px;color:#2a2a2a;left:402.00px;">$</div>
<div class="t" style="top:184.56px;font-size:6.600px;color:#2a2a2a;left:238.10px;width:200px;text-align:right;">6,753</div>
<div class="t" style="top:184.56px;font-size:6.600px;color:#2a2a2a;left:479.10px;">$</div>
<div class="t" style="top:184.56px;font-size:6.600px;color:#2a2a2a;left:311.20px;width:200px;text-align:right;">500</div>
<div class="t" style="top:184.56px;font-size:6.600px;color:#2a2a2a;left:519.10px;">$</div>
<div class="t" style="top:184.56px;font-size:6.600px;color:#2a2a2a;left:351.20px;width:200px;text-align:right;">500</div>
<div class="t" style="top:184.56px;font-size:6.600px;color:#2a2a2a;left:559.10px;">$</div>
<div class="t" style="top:184.56px;font-size:6.600px;color:#2a2a2a;left:391.20px;width:200px;text-align:right;">500</div>
<div class="t" style="top:184.56px;font-size:6.600px;color:#2a2a2a;left:599.10px;">$</div>
<div class="t" style="top:184.56px;font-size:6.600px;color:#2a2a2a;left:431.20px;width:200px;text-align:right;">500</div>
<div class="t" style="top:184.56px;font-size:6.600px;color:#2a2a2a;left:639.10px;">$</div>
<div class="t" style="top:184.56px;font-size:6.600px;color:#2a2a2a;left:471.20px;width:200px;text-align:right;">500</div>
<div class="t" style="top:184.56px;font-size:6.600px;color:#2a2a2a;left:679.10px;">$</div>
<div class="t" style="top:184.56px;font-size:6.600px;color:#2a2a2a;left:511.20px;width:200px;text-align:right;">500</div>
<div class="t" style="top:184.56px;font-size:6.600px;color:#2a2a2a;left:719.10px;">$</div>
<div class="t" style="top:184.56px;font-size:6.600px;color:#2a2a2a;left:551.20px;width:200px;text-align:right;">500</div>
<div class="t" style="top:184.56px;font-size:6.600px;color:#2a2a2a;left:759.10px;">$</div>
<div class="t" style="top:184.56px;font-size:6.600px;color:#2a2a2a;left:591.20px;width:200px;text-align:right;">500</div>
<div class="t" style="top:201.29px;font-size:6.550px;color:#333;left:15.60px;">Marketing</div>
<div class="r" style="left:12.00px;top:209.06px;width:121.50px;height:0.90px;background:#8a8a8a;"></div>
<div class="t" style="top:209.64px;font-size:6.550px;color:#333;left:137.00px;">Operations</div>
<div class="t" style="top:209.63px;font-size:6.600px;color:#2a2a2a;left:176.70px;">$</div>
<div class="t" style="top:209.63px;font-size:6.600px;color:#2a2a2a;left:43.10px;width:200px;text-align:right;">6,000</div>
<div class="t" style="top:209.63px;font-size:6.600px;color:#2a2a2a;left:251.00px;">$</div>
<div class="t" style="top:209.63px;font-size:6.600px;color:#2a2a2a;left:82.85px;width:200px;text-align:right;">6,060</div>
<div class="t" style="top:209.63px;font-size:6.600px;color:#2a2a2a;left:290.75px;">$</div>
<div class="t" style="top:209.63px;font-size:6.600px;color:#2a2a2a;left:127.20px;width:200px;text-align:right;">6,121</div>
<div class="t" style="top:209.63px;font-size:6.600px;color:#2a2a2a;left:335.10px;">$</div>
<div class="t" style="top:209.63px;font-size:6.600px;color:#2a2a2a;left:194.10px;width:200px;text-align:right;">6,182</div>
<div class="t" style="top:209.63px;font-size:6.600px;color:#2a2a2a;left:402.00px;">$</div>
<div class="t" style="top:209.63px;font-size:6.600px;color:#2a2a2a;left:238.10px;width:200px;text-align:right;">6,244</div>
<div class="t" style="top:209.63px;font-size:6.600px;color:#2a2a2a;left:479.10px;">$</div>
<div class="t" style="top:209.63px;font-size:6.600px;color:#2a2a2a;left:311.20px;width:200px;text-align:right;">500</div>
<div class="t" style="top:209.63px;font-size:6.600px;color:#2a2a2a;left:519.10px;">$</div>
<div class="t" style="top:209.63px;font-size:6.600px;color:#2a2a2a;left:351.20px;width:200px;text-align:right;">500</div>
<div class="t" style="top:209.63px;font-size:6.600px;color:#2a2a2a;left:559.10px;">$</div>
<div class="t" style="top:209.63px;font-size:6.600px;color:#2a2a2a;left:391.20px;width:200px;text-align:right;">500</div>
<div class="t" style="top:209.63px;font-size:6.600px;color:#2a2a2a;left:599.10px;">$</div>
<div class="t" style="top:209.63px;font-size:6.600px;color:#2a2a2a;left:431.20px;width:200px;text-align:right;">500</div>
<div class="t" style="top:209.63px;font-size:6.600px;color:#2a2a2a;left:639.10px;">$</div>
<div class="t" style="top:209.63px;font-size:6.600px;color:#2a2a2a;left:471.20px;width:200px;text-align:right;">500</div>
<div class="t" style="top:209.63px;font-size:6.600px;color:#2a2a2a;left:679.10px;">$</div>
<div class="t" style="top:209.63px;font-size:6.600px;color:#2a2a2a;left:511.20px;width:200px;text-align:right;">500</div>
<div class="t" style="top:209.63px;font-size:6.600px;color:#2a2a2a;left:719.10px;">$</div>
<div class="t" style="top:209.63px;font-size:6.600px;color:#2a2a2a;left:551.20px;width:200px;text-align:right;">500</div>
<div class="t" style="top:209.63px;font-size:6.600px;color:#2a2a2a;left:759.10px;">$</div>
<div class="t" style="top:209.63px;font-size:6.600px;color:#2a2a2a;left:591.20px;width:200px;text-align:right;">500</div>
<div class="t" style="top:218.00px;font-size:6.550px;color:#333;left:137.00px;">Payroll</div>
<div class="t" style="top:217.98px;font-size:6.600px;color:#2a2a2a;left:176.70px;">$</div>
<div class="t" style="top:217.98px;font-size:6.600px;color:#2a2a2a;left:43.10px;width:200px;text-align:right;">9,000</div>
<div class="t" style="top:217.98px;font-size:6.600px;color:#2a2a2a;left:251.00px;">$</div>
<div class="t" style="top:217.98px;font-size:6.600px;color:#2a2a2a;left:82.85px;width:200px;text-align:right;">9,270</div>
<div class="t" style="top:217.98px;font-size:6.600px;color:#2a2a2a;left:290.75px;">$</div>
<div class="t" style="top:217.98px;font-size:6.600px;color:#2a2a2a;left:127.20px;width:200px;text-align:right;">9,548</div>
<div class="t" style="top:217.98px;font-size:6.600px;color:#2a2a2a;left:335.10px;">$</div>
<div class="t" style="top:217.98px;font-size:6.600px;color:#2a2a2a;left:194.10px;width:200px;text-align:right;">9,835</div>
<div class="t" style="top:217.98px;font-size:6.600px;color:#2a2a2a;left:402.00px;">$</div>
<div class="t" style="top:217.98px;font-size:6.600px;color:#2a2a2a;left:238.10px;width:200px;text-align:right;">10,130</div>
<div class="t" style="top:217.98px;font-size:6.600px;color:#2a2a2a;left:479.10px;">$</div>
<div class="t" style="top:217.98px;font-size:6.600px;color:#2a2a2a;left:311.20px;width:200px;text-align:right;">750</div>
<div class="t" style="top:217.98px;font-size:6.600px;color:#2a2a2a;left:519.10px;">$</div>
<div class="t" style="top:217.98px;font-size:6.600px;color:#2a2a2a;left:351.20px;width:200px;text-align:right;">750</div>
<div class="t" style="top:217.98px;font-size:6.600px;color:#2a2a2a;left:559.10px;">$</div>
<div class="t" style="top:217.98px;font-size:6.600px;color:#2a2a2a;left:391.20px;width:200px;text-align:right;">750</div>
<div class="t" style="top:217.98px;font-size:6.600px;color:#2a2a2a;left:599.10px;">$</div>
<div class="t" style="top:217.98px;font-size:6.600px;color:#2a2a2a;left:431.20px;width:200px;text-align:right;">750</div>
<div class="t" style="top:217.98px;font-size:6.600px;color:#2a2a2a;left:639.10px;">$</div>
<div class="t" style="top:217.98px;font-size:6.600px;color:#2a2a2a;left:471.20px;width:200px;text-align:right;">750</div>
<div class="t" style="top:217.98px;font-size:6.600px;color:#2a2a2a;left:679.10px;">$</div>
<div class="t" style="top:217.98px;font-size:6.600px;color:#2a2a2a;left:511.20px;width:200px;text-align:right;">750</div>
<div class="t" style="top:217.98px;font-size:6.600px;color:#2a2a2a;left:719.10px;">$</div>
<div class="t" style="top:217.98px;font-size:6.600px;color:#2a2a2a;left:551.20px;width:200px;text-align:right;">750</div>
<div class="t" style="top:217.98px;font-size:6.600px;color:#2a2a2a;left:759.10px;">$</div>
<div class="t" style="top:217.98px;font-size:6.600px;color:#2a2a2a;left:591.20px;width:200px;text-align:right;">750</div>
<div class="t" style="top:234.71px;font-size:6.550px;color:#333;left:15.60px;">IT</div>
<div class="r" style="left:12.00px;top:242.48px;width:121.50px;height:0.90px;background:#8a8a8a;"></div>
<div class="t" style="top:243.07px;font-size:6.550px;color:#333;left:137.00px;">Operations</div>
<div class="t" style="top:243.05px;font-size:6.600px;color:#2a2a2a;left:176.70px;">$</div>
<div class="t" style="top:243.05px;font-size:6.600px;color:#2a2a2a;left:43.10px;width:200px;text-align:right;">6,000</div>
<div class="t" style="top:243.05px;font-size:6.600px;color:#2a2a2a;left:251.00px;">$</div>
<div class="t" style="top:243.05px;font-size:6.600px;color:#2a2a2a;left:82.85px;width:200px;text-align:right;">6,060</div>
<div class="t" style="top:243.05px;font-size:6.600px;color:#2a2a2a;left:290.75px;">$</div>
<div class="t" style="top:243.05px;font-size:6.600px;color:#2a2a2a;left:127.20px;width:200px;text-align:right;">6,121</div>
<div class="t" style="top:243.05px;font-size:6.600px;color:#2a2a2a;left:335.10px;">$</div>
<div class="t" style="top:243.05px;font-size:6.600px;color:#2a2a2a;left:194.10px;width:200px;text-align:right;">6,182</div>
<div class="t" style="top:243.05px;font-size:6.600px;color:#2a2a2a;left:402.00px;">$</div>
<div class="t" style="top:243.05px;font-size:6.600px;color:#2a2a2a;left:238.10px;width:200px;text-align:right;">6,244</div>
<div class="t" style="top:243.05px;font-size:6.600px;color:#2a2a2a;left:479.10px;">$</div>
<div class="t" style="top:243.05px;font-size:6.600px;color:#2a2a2a;left:311.20px;width:200px;text-align:right;">500</div>
<div class="t" style="top:243.05px;font-size:6.600px;color:#2a2a2a;left:519.10px;">$</div>
<div class="t" style="top:243.05px;font-size:6.600px;color:#2a2a2a;left:351.20px;width:200px;text-align:right;">500</div>
<div class="t" style="top:243.05px;font-size:6.600px;color:#2a2a2a;left:559.10px;">$</div>
<div class="t" style="top:243.05px;font-size:6.600px;color:#2a2a2a;left:391.20px;width:200px;text-align:right;">500</div>
<div class="t" style="top:243.05px;font-size:6.600px;color:#2a2a2a;left:599.10px;">$</div>
<div class="t" style="top:243.05px;font-size:6.600px;color:#2a2a2a;left:431.20px;width:200px;text-align:right;">500</div>
<div class="t" style="top:243.05px;font-size:6.600px;color:#2a2a2a;left:639.10px;">$</div>
<div class="t" style="top:243.05px;font-size:6.600px;color:#2a2a2a;left:471.20px;width:200px;text-align:right;">500</div>
<div class="t" style="top:243.05px;font-size:6.600px;color:#2a2a2a;left:679.10px;">$</div>
<div class="t" style="top:243.05px;font-size:6.600px;color:#2a2a2a;left:511.20px;width:200px;text-align:right;">500</div>
<div class="t" style="top:243.05px;font-size:6.600px;color:#2a2a2a;left:719.10px;">$</div>
<div class="t" style="top:243.05px;font-size:6.600px;color:#2a2a2a;left:551.20px;width:200px;text-align:right;">500</div>
<div class="t" style="top:243.05px;font-size:6.600px;color:#2a2a2a;left:759.10px;">$</div>
<div class="t" style="top:243.05px;font-size:6.600px;color:#2a2a2a;left:591.20px;width:200px;text-align:right;">500</div>
<div class="t" style="top:251.43px;font-size:6.550px;color:#333;left:137.00px;">Payroll</div>
<div class="t" style="top:251.41px;font-size:6.600px;color:#2a2a2a;left:176.70px;">$</div>
<div class="t" style="top:251.41px;font-size:6.600px;color:#2a2a2a;left:43.10px;width:200px;text-align:right;">6,000</div>
<div class="t" style="top:251.41px;font-size:6.600px;color:#2a2a2a;left:251.00px;">$</div>
<div class="t" style="top:251.41px;font-size:6.600px;color:#2a2a2a;left:82.85px;width:200px;text-align:right;">6,180</div>
<div class="t" style="top:251.41px;font-size:6.600px;color:#2a2a2a;left:290.75px;">$</div>
<div class="t" style="top:251.41px;font-size:6.600px;color:#2a2a2a;left:127.20px;width:200px;text-align:right;">6,365</div>
<div class="t" style="top:251.41px;font-size:6.600px;color:#2a2a2a;left:335.10px;">$</div>
<div class="t" style="top:251.41px;font-size:6.600px;color:#2a2a2a;left:194.10px;width:200px;text-align:right;">6,556</div>
<div class="t" style="top:251.41px;font-size:6.600px;color:#2a2a2a;left:402.00px;">$</div>
<div class="t" style="top:251.41px;font-size:6.600px;color:#2a2a2a;left:238.10px;width:200px;text-align:right;">6,753</div>
<div class="t" style="top:251.41px;font-size:6.600px;color:#2a2a2a;left:479.10px;">$</div>
<div class="t" style="top:251.41px;font-size:6.600px;color:#2a2a2a;left:311.20px;width:200px;text-align:right;">500</div>
<div class="t" style="top:251.41px;font-size:6.600px;color:#2a2a2a;left:519.10px;">$</div>
<div class="t" style="top:251.41px;font-size:6.600px;color:#2a2a2a;left:351.20px;width:200px;text-align:right;">500</div>
<div class="t" style="top:251.41px;font-size:6.600px;color:#2a2a2a;left:559.10px;">$</div>
<div class="t" style="top:251.41px;font-size:6.600px;color:#2a2a2a;left:391.20px;width:200px;text-align:right;">500</div>
<div class="t" style="top:251.41px;font-size:6.600px;color:#2a2a2a;left:599.10px;">$</div>
<div class="t" style="top:251.41px;font-size:6.600px;color:#2a2a2a;left:431.20px;width:200px;text-align:right;">500</div>
<div class="t" style="top:251.41px;font-size:6.600px;color:#2a2a2a;left:639.10px;">$</div>
<div class="t" style="top:251.41px;font-size:6.600px;color:#2a2a2a;left:471.20px;width:200px;text-align:right;">500</div>
<div class="t" style="top:251.41px;font-size:6.600px;color:#2a2a2a;left:679.10px;">$</div>
<div class="t" style="top:251.41px;font-size:6.600px;color:#2a2a2a;left:511.20px;width:200px;text-align:right;">500</div>
<div class="t" style="top:251.41px;font-size:6.600px;color:#2a2a2a;left:719.10px;">$</div>
<div class="t" style="top:251.41px;font-size:6.600px;color:#2a2a2a;left:551.20px;width:200px;text-align:right;">500</div>
<div class="t" style="top:251.41px;font-size:6.600px;color:#2a2a2a;left:759.10px;">$</div>
<div class="t" style="top:251.41px;font-size:6.600px;color:#2a2a2a;left:591.20px;width:200px;text-align:right;">500</div>
<div class="t" style="top:268.14px;font-size:6.550px;color:#333;left:15.60px;">Customer Service</div>
<div class="r" style="left:12.00px;top:275.91px;width:121.50px;height:0.90px;background:#8a8a8a;"></div>
<div class="t" style="top:276.50px;font-size:6.550px;color:#333;left:137.00px;">Operations</div>
<div class="t" style="top:276.48px;font-size:6.600px;color:#2a2a2a;left:176.70px;">$</div>
<div class="t" style="top:276.48px;font-size:6.600px;color:#2a2a2a;left:43.10px;width:200px;text-align:right;">58,250</div>
<div class="t" style="top:276.48px;font-size:6.600px;color:#2a2a2a;left:251.00px;">$</div>
<div class="t" style="top:276.48px;font-size:6.600px;color:#2a2a2a;left:82.85px;width:200px;text-align:right;">64,200</div>
<div class="t" style="top:276.48px;font-size:6.600px;color:#2a2a2a;left:290.75px;">$</div>
<div class="t" style="top:276.48px;font-size:6.600px;color:#2a2a2a;left:127.20px;width:200px;text-align:right;">66,005</div>
<div class="t" style="top:276.48px;font-size:6.600px;color:#2a2a2a;left:335.10px;">$</div>
<div class="t" style="top:276.48px;font-size:6.600px;color:#2a2a2a;left:194.10px;width:200px;text-align:right;">67,863</div>
<div class="t" style="top:276.48px;font-size:6.600px;color:#2a2a2a;left:402.00px;">$</div>
<div class="t" style="top:276.48px;font-size:6.600px;color:#2a2a2a;left:238.10px;width:200px;text-align:right;">69,775</div>
<div class="t" style="top:276.48px;font-size:6.600px;color:#2a2a2a;left:479.10px;">$</div>
<div class="t" style="top:276.48px;font-size:6.600px;color:#2a2a2a;left:311.20px;width:200px;text-align:right;">500</div>
<div class="t" style="top:276.48px;font-size:6.600px;color:#2a2a2a;left:519.10px;">$</div>
<div class="t" style="top:276.48px;font-size:6.600px;color:#2a2a2a;left:351.20px;width:200px;text-align:right;">5,250</div>
<div class="t" style="top:276.48px;font-size:6.600px;color:#2a2a2a;left:559.10px;">$</div>
<div class="t" style="top:276.48px;font-size:6.600px;color:#2a2a2a;left:391.20px;width:200px;text-align:right;">5,250</div>
<div class="t" style="top:276.48px;font-size:6.600px;color:#2a2a2a;left:599.10px;">$</div>
<div class="t" style="top:276.48px;font-size:6.600px;color:#2a2a2a;left:431.20px;width:200px;text-align:right;">5,250</div>
<div class="t" style="top:276.48px;font-size:6.600px;color:#2a2a2a;left:639.10px;">$</div>
<div class="t" style="top:276.48px;font-size:6.600px;color:#2a2a2a;left:471.20px;width:200px;text-align:right;">5,250</div>
<div class="t" style="top:276.48px;font-size:6.600px;color:#2a2a2a;left:679.10px;">$</div>
<div class="t" style="top:276.48px;font-size:6.600px;color:#2a2a2a;left:511.20px;width:200px;text-align:right;">5,250</div>
<div class="t" style="top:276.48px;font-size:6.600px;color:#2a2a2a;left:719.10px;">$</div>
<div class="t" style="top:276.48px;font-size:6.600px;color:#2a2a2a;left:551.20px;width:200px;text-align:right;">5,250</div>
<div class="t" style="top:276.48px;font-size:6.600px;color:#2a2a2a;left:759.10px;">$</div>
<div class="t" style="top:276.48px;font-size:6.600px;color:#2a2a2a;left:591.20px;width:200px;text-align:right;">5,250</div>
<div class="t" style="top:284.86px;font-size:6.550px;color:#333;left:137.00px;">Payroll</div>
<div class="t" style="top:284.84px;font-size:6.600px;color:#2a2a2a;left:176.70px;">$</div>
<div class="t" style="top:284.84px;font-size:6.600px;color:#2a2a2a;left:43.10px;width:200px;text-align:right;">6,000</div>
<div class="t" style="top:284.84px;font-size:6.600px;color:#2a2a2a;left:251.00px;">$</div>
<div class="t" style="top:284.84px;font-size:6.600px;color:#2a2a2a;left:82.85px;width:200px;text-align:right;">6,180</div>
<div class="t" style="top:284.84px;font-size:6.600px;color:#2a2a2a;left:290.75px;">$</div>
<div class="t" style="top:284.84px;font-size:6.600px;color:#2a2a2a;left:127.20px;width:200px;text-align:right;">6,365</div>
<div class="t" style="top:284.84px;font-size:6.600px;color:#2a2a2a;left:335.10px;">$</div>
<div class="t" style="top:284.84px;font-size:6.600px;color:#2a2a2a;left:194.10px;width:200px;text-align:right;">6,556</div>
<div class="t" style="top:284.84px;font-size:6.600px;color:#2a2a2a;left:402.00px;">$</div>
<div class="t" style="top:284.84px;font-size:6.600px;color:#2a2a2a;left:238.10px;width:200px;text-align:right;">6,753</div>
<div class="t" style="top:284.84px;font-size:6.600px;color:#2a2a2a;left:479.10px;">$</div>
<div class="t" style="top:284.84px;font-size:6.600px;color:#2a2a2a;left:311.20px;width:200px;text-align:right;">500</div>
<div class="t" style="top:284.84px;font-size:6.600px;color:#2a2a2a;left:519.10px;">$</div>
<div class="t" style="top:284.84px;font-size:6.600px;color:#2a2a2a;left:351.20px;width:200px;text-align:right;">500</div>
<div class="t" style="top:284.84px;font-size:6.600px;color:#2a2a2a;left:559.10px;">$</div>
<div class="t" style="top:284.84px;font-size:6.600px;color:#2a2a2a;left:391.20px;width:200px;text-align:right;">500</div>
<div class="t" style="top:284.84px;font-size:6.600px;color:#2a2a2a;left:599.10px;">$</div>
<div class="t" style="top:284.84px;font-size:6.600px;color:#2a2a2a;left:431.20px;width:200px;text-align:right;">500</div>
<div class="t" style="top:284.84px;font-size:6.600px;color:#2a2a2a;left:639.10px;">$</div>
<div class="t" style="top:284.84px;font-size:6.600px;color:#2a2a2a;left:471.20px;width:200px;text-align:right;">500</div>
<div class="t" style="top:284.84px;font-size:6.600px;color:#2a2a2a;left:679.10px;">$</div>
<div class="t" style="top:284.84px;font-size:6.600px;color:#2a2a2a;left:511.20px;width:200px;text-align:right;">500</div>
<div class="t" style="top:284.84px;font-size:6.600px;color:#2a2a2a;left:719.10px;">$</div>
<div class="t" style="top:284.84px;font-size:6.600px;color:#2a2a2a;left:551.20px;width:200px;text-align:right;">500</div>
<div class="t" style="top:284.84px;font-size:6.600px;color:#2a2a2a;left:759.10px;">$</div>
<div class="t" style="top:284.84px;font-size:6.600px;color:#2a2a2a;left:591.20px;width:200px;text-align:right;">500</div>
<div class="t" style="top:301.57px;font-size:6.550px;color:#333;left:15.60px;">Purchasing</div>
<div class="r" style="left:12.00px;top:309.34px;width:121.50px;height:0.90px;background:#8a8a8a;"></div>
<div class="t" style="top:309.93px;font-size:6.550px;color:#333;left:137.00px;">Operations</div>
<div class="t" style="top:309.91px;font-size:6.600px;color:#2a2a2a;left:176.70px;">$</div>
<div class="t" style="top:309.91px;font-size:6.600px;color:#2a2a2a;left:43.10px;width:200px;text-align:right;">6,000</div>
<div class="t" style="top:309.91px;font-size:6.600px;color:#2a2a2a;left:251.00px;">$</div>
<div class="t" style="top:309.91px;font-size:6.600px;color:#2a2a2a;left:82.85px;width:200px;text-align:right;">6,060</div>
<div class="t" style="top:309.91px;font-size:6.600px;color:#2a2a2a;left:290.75px;">$</div>
<div class="t" style="top:309.91px;font-size:6.600px;color:#2a2a2a;left:127.20px;width:200px;text-align:right;">6,121</div>
<div class="t" style="top:309.91px;font-size:6.600px;color:#2a2a2a;left:335.10px;">$</div>
<div class="t" style="top:309.91px;font-size:6.600px;color:#2a2a2a;left:194.10px;width:200px;text-align:right;">6,182</div>
<div class="t" style="top:309.91px;font-size:6.600px;color:#2a2a2a;left:402.00px;">$</div>
<div class="t" style="top:309.91px;font-size:6.600px;color:#2a2a2a;left:238.10px;width:200px;text-align:right;">6,244</div>
<div class="t" style="top:309.91px;font-size:6.600px;color:#2a2a2a;left:479.10px;">$</div>
<div class="t" style="top:309.91px;font-size:6.600px;color:#2a2a2a;left:311.20px;width:200px;text-align:right;">500</div>
<div class="t" style="top:309.91px;font-size:6.600px;color:#2a2a2a;left:519.10px;">$</div>
<div class="t" style="top:309.91px;font-size:6.600px;color:#2a2a2a;left:351.20px;width:200px;text-align:right;">500</div>
<div class="t" style="top:309.91px;font-size:6.600px;color:#2a2a2a;left:559.10px;">$</div>
<div class="t" style="top:309.91px;font-size:6.600px;color:#2a2a2a;left:391.20px;width:200px;text-align:right;">500</div>
<div class="t" style="top:309.91px;font-size:6.600px;color:#2a2a2a;left:599.10px;">$</div>
<div class="t" style="top:309.91px;font-size:6.600px;color:#2a2a2a;left:431.20px;width:200px;text-align:right;">500</div>
<div class="t" style="top:309.91px;font-size:6.600px;color:#2a2a2a;left:639.10px;">$</div>
<div class="t" style="top:309.91px;font-size:6.600px;color:#2a2a2a;left:471.20px;width:200px;text-align:right;">500</div>
<div class="t" style="top:309.91px;font-size:6.600px;color:#2a2a2a;left:679.10px;">$</div>
<div class="t" style="top:309.91px;font-size:6.600px;color:#2a2a2a;left:511.20px;width:200px;text-align:right;">500</div>
<div class="t" style="top:309.91px;font-size:6.600px;color:#2a2a2a;left:719.10px;">$</div>
<div class="t" style="top:309.91px;font-size:6.600px;color:#2a2a2a;left:551.20px;width:200px;text-align:right;">500</div>
<div class="t" style="top:309.91px;font-size:6.600px;color:#2a2a2a;left:759.10px;">$</div>
<div class="t" style="top:309.91px;font-size:6.600px;color:#2a2a2a;left:591.20px;width:200px;text-align:right;">500</div>
<div class="t" style="top:318.28px;font-size:6.550px;color:#333;left:137.00px;">Payroll</div>
<div class="t" style="top:318.27px;font-size:6.600px;color:#2a2a2a;left:176.70px;">$</div>
<div class="t" style="top:318.27px;font-size:6.600px;color:#2a2a2a;left:43.10px;width:200px;text-align:right;">6,000</div>
<div class="t" style="top:318.27px;font-size:6.600px;color:#2a2a2a;left:251.00px;">$</div>
<div class="t" style="top:318.27px;font-size:6.600px;color:#2a2a2a;left:82.85px;width:200px;text-align:right;">6,180</div>
<div class="t" style="top:318.27px;font-size:6.600px;color:#2a2a2a;left:290.75px;">$</div>
<div class="t" style="top:318.27px;font-size:6.600px;color:#2a2a2a;left:127.20px;width:200px;text-align:right;">6,365</div>
<div class="t" style="top:318.27px;font-size:6.600px;color:#2a2a2a;left:335.10px;">$</div>
<div class="t" style="top:318.27px;font-size:6.600px;color:#2a2a2a;left:194.10px;width:200px;text-align:right;">6,556</div>
<div class="t" style="top:318.27px;font-size:6.600px;color:#2a2a2a;left:402.00px;">$</div>
<div class="t" style="top:318.27px;font-size:6.600px;color:#2a2a2a;left:238.10px;width:200px;text-align:right;">6,753</div>
<div class="t" style="top:318.27px;font-size:6.600px;color:#2a2a2a;left:479.10px;">$</div>
<div class="t" style="top:318.27px;font-size:6.600px;color:#2a2a2a;left:311.20px;width:200px;text-align:right;">500</div>
<div class="t" style="top:318.27px;font-size:6.600px;color:#2a2a2a;left:519.10px;">$</div>
<div class="t" style="top:318.27px;font-size:6.600px;color:#2a2a2a;left:351.20px;width:200px;text-align:right;">500</div>
<div class="t" style="top:318.27px;font-size:6.600px;color:#2a2a2a;left:559.10px;">$</div>
<div class="t" style="top:318.27px;font-size:6.600px;color:#2a2a2a;left:391.20px;width:200px;text-align:right;">500</div>
<div class="t" style="top:318.27px;font-size:6.600px;color:#2a2a2a;left:599.10px;">$</div>
<div class="t" style="top:318.27px;font-size:6.600px;color:#2a2a2a;left:431.20px;width:200px;text-align:right;">500</div>
<div class="t" style="top:318.27px;font-size:6.600px;color:#2a2a2a;left:639.10px;">$</div>
<div class="t" style="top:318.27px;font-size:6.600px;color:#2a2a2a;left:471.20px;width:200px;text-align:right;">500</div>
<div class="t" style="top:318.27px;font-size:6.600px;color:#2a2a2a;left:679.10px;">$</div>
<div class="t" style="top:318.27px;font-size:6.600px;color:#2a2a2a;left:511.20px;width:200px;text-align:right;">500</div>
<div class="t" style="top:318.27px;font-size:6.600px;color:#2a2a2a;left:719.10px;">$</div>
<div class="t" style="top:318.27px;font-size:6.600px;color:#2a2a2a;left:551.20px;width:200px;text-align:right;">500</div>
<div class="t" style="top:318.27px;font-size:6.600px;color:#2a2a2a;left:759.10px;">$</div>
<div class="t" style="top:318.27px;font-size:6.600px;color:#2a2a2a;left:591.20px;width:200px;text-align:right;">500</div>
<div class="t" style="top:335.00px;font-size:6.550px;color:#333;left:15.60px;">Human Resources</div>
<div class="r" style="left:12.00px;top:342.77px;width:121.50px;height:0.90px;background:#8a8a8a;"></div>
<div class="t" style="top:343.36px;font-size:6.550px;color:#333;left:137.00px;">Operations</div>
<div class="t" style="top:343.34px;font-size:6.600px;color:#2a2a2a;left:176.70px;">$</div>
<div class="t" style="top:343.34px;font-size:6.600px;color:#2a2a2a;left:43.10px;width:200px;text-align:right;">6,000</div>
<div class="t" style="top:343.34px;font-size:6.600px;color:#2a2a2a;left:251.00px;">$</div>
<div class="t" style="top:343.34px;font-size:6.600px;color:#2a2a2a;left:82.85px;width:200px;text-align:right;">6,060</div>
<div class="t" style="top:343.34px;font-size:6.600px;color:#2a2a2a;left:290.75px;">$</div>
<div class="t" style="top:343.34px;font-size:6.600px;color:#2a2a2a;left:127.20px;width:200px;text-align:right;">6,121</div>
<div class="t" style="top:343.34px;font-size:6.600px;color:#2a2a2a;left:335.10px;">$</div>
<div class="t" style="top:343.34px;font-size:6.600px;color:#2a2a2a;left:194.10px;width:200px;text-align:right;">6,182</div>
<div class="t" style="top:343.34px;font-size:6.600px;color:#2a2a2a;left:402.00px;">$</div>
<div class="t" style="top:343.34px;font-size:6.600px;color:#2a2a2a;left:238.10px;width:200px;text-align:right;">6,244</div>
<div class="t" style="top:343.34px;font-size:6.600px;color:#2a2a2a;left:479.10px;">$</div>
<div class="t" style="top:343.34px;font-size:6.600px;color:#2a2a2a;left:311.20px;width:200px;text-align:right;">500</div>
<div class="t" style="top:343.34px;font-size:6.600px;color:#2a2a2a;left:519.10px;">$</div>
<div class="t" style="top:343.34px;font-size:6.600px;color:#2a2a2a;left:351.20px;width:200px;text-align:right;">500</div>
<div class="t" style="top:343.34px;font-size:6.600px;color:#2a2a2a;left:559.10px;">$</div>
<div class="t" style="top:343.34px;font-size:6.600px;color:#2a2a2a;left:391.20px;width:200px;text-align:right;">500</div>
<div class="t" style="top:343.34px;font-size:6.600px;color:#2a2a2a;left:599.10px;">$</div>
<div class="t" style="top:343.34px;font-size:6.600px;color:#2a2a2a;left:431.20px;width:200px;text-align:right;">500</div>
<div class="t" style="top:343.34px;font-size:6.600px;color:#2a2a2a;left:639.10px;">$</div>
<div class="t" style="top:343.34px;font-size:6.600px;color:#2a2a2a;left:471.20px;width:200px;text-align:right;">500</div>
<div class="t" style="top:343.34px;font-size:6.600px;color:#2a2a2a;left:679.10px;">$</div>
<div class="t" style="top:343.34px;font-size:6.600px;color:#2a2a2a;left:511.20px;width:200px;text-align:right;">500</div>
<div class="t" style="top:343.34px;font-size:6.600px;color:#2a2a2a;left:719.10px;">$</div>
<div class="t" style="top:343.34px;font-size:6.600px;color:#2a2a2a;left:551.20px;width:200px;text-align:right;">500</div>
<div class="t" style="top:343.34px;font-size:6.600px;color:#2a2a2a;left:759.10px;">$</div>
<div class="t" style="top:343.34px;font-size:6.600px;color:#2a2a2a;left:591.20px;width:200px;text-align:right;">500</div>
<div class="t" style="top:351.71px;font-size:6.550px;color:#333;left:137.00px;">Payroll</div>
<div class="t" style="top:351.70px;font-size:6.600px;color:#2a2a2a;left:176.70px;">$</div>
<div class="t" style="top:351.70px;font-size:6.600px;color:#2a2a2a;left:43.10px;width:200px;text-align:right;">3,000</div>
<div class="t" style="top:351.70px;font-size:6.600px;color:#2a2a2a;left:251.00px;">$</div>
<div class="t" style="top:351.70px;font-size:6.600px;color:#2a2a2a;left:82.85px;width:200px;text-align:right;">3,090</div>
<div class="t" style="top:351.70px;font-size:6.600px;color:#2a2a2a;left:290.75px;">$</div>
<div class="t" style="top:351.70px;font-size:6.600px;color:#2a2a2a;left:127.20px;width:200px;text-align:right;">3,183</div>
<div class="t" style="top:351.70px;font-size:6.600px;color:#2a2a2a;left:335.10px;">$</div>
<div class="t" style="top:351.70px;font-size:6.600px;color:#2a2a2a;left:194.10px;width:200px;text-align:right;">3,278</div>
<div class="t" style="top:351.70px;font-size:6.600px;color:#2a2a2a;left:402.00px;">$</div>
<div class="t" style="top:351.70px;font-size:6.600px;color:#2a2a2a;left:238.10px;width:200px;text-align:right;">3,377</div>
<div class="t" style="top:351.70px;font-size:6.600px;color:#2a2a2a;left:479.10px;">$</div>
<div class="t" style="top:351.70px;font-size:6.600px;color:#2a2a2a;left:311.20px;width:200px;text-align:right;">250</div>
<div class="t" style="top:351.70px;font-size:6.600px;color:#2a2a2a;left:519.10px;">$</div>
<div class="t" style="top:351.70px;font-size:6.600px;color:#2a2a2a;left:351.20px;width:200px;text-align:right;">250</div>
<div class="t" style="top:351.70px;font-size:6.600px;color:#2a2a2a;left:559.10px;">$</div>
<div class="t" style="top:351.70px;font-size:6.600px;color:#2a2a2a;left:391.20px;width:200px;text-align:right;">250</div>
<div class="t" style="top:351.70px;font-size:6.600px;color:#2a2a2a;left:599.10px;">$</div>
<div class="t" style="top:351.70px;font-size:6.600px;color:#2a2a2a;left:431.20px;width:200px;text-align:right;">250</div>
<div class="t" style="top:351.70px;font-size:6.600px;color:#2a2a2a;left:639.10px;">$</div>
<div class="t" style="top:351.70px;font-size:6.600px;color:#2a2a2a;left:471.20px;width:200px;text-align:right;">250</div>
<div class="t" style="top:351.70px;font-size:6.600px;color:#2a2a2a;left:679.10px;">$</div>
<div class="t" style="top:351.70px;font-size:6.600px;color:#2a2a2a;left:511.20px;width:200px;text-align:right;">250</div>
<div class="t" style="top:351.70px;font-size:6.600px;color:#2a2a2a;left:719.10px;">$</div>
<div class="t" style="top:351.70px;font-size:6.600px;color:#2a2a2a;left:551.20px;width:200px;text-align:right;">250</div>
<div class="t" style="top:351.70px;font-size:6.600px;color:#2a2a2a;left:759.10px;">$</div>
<div class="t" style="top:351.70px;font-size:6.600px;color:#2a2a2a;left:591.20px;width:200px;text-align:right;">250</div>
<div class="t" style="top:368.43px;font-size:6.550px;color:#333;left:15.60px;">Logistics</div>
<div class="r" style="left:12.00px;top:376.20px;width:121.50px;height:0.90px;background:#8a8a8a;"></div>
</div>
<div class="r" style="left:789.30px;top:23.00px;width:10.70px;height:355.40px;background:#f1f1f1;"></div>
<div class="r" style="left:789.30px;top:23.00px;width:1.00px;height:355.40px;background:#d6d6d6;"></div>
<div class="r" style="left:790.50px;top:25.00px;width:8.00px;height:6.80px;background:#fff;box-shadow:0 0 0 0.4px #c8c8c8;"></div>
<svg style="position:absolute;left:792.5px;top:27px" width="5" height="3"><path d="M0 2.8H4.4L2.2 0.3Z" fill="#333"/></svg>
<div class="r" style="left:790.50px;top:32.00px;width:8.00px;height:13.50px;background:#fff;box-shadow:0 0 0 0.4px #c8c8c8;"></div>
<div class="r" style="left:790.50px;top:371.50px;width:8.00px;height:6.30px;background:#fff;box-shadow:0 0 0 0.4px #c8c8c8;"></div>
<svg style="position:absolute;left:792.5px;top:373.5px" width="5" height="3"><path d="M0 0.2H4.4L2.2 2.7Z" fill="#333"/></svg>
<div class="r" style="left:0.00px;top:377.80px;width:800.00px;height:12.70px;background:#e8e8e8;"></div>
<div class="r" style="left:0.00px;top:377.80px;width:790.00px;height:0.60px;background:#cfcfcf;"></div>
<svg style="position:absolute;left:11.5px;top:382.3px" width="3" height="5"><path d="M2.5 0L0 2.2L2.5 4.4Z" fill="#c0c0c0"/></svg>
<svg style="position:absolute;left:23px;top:382.3px" width="3" height="5"><path d="M0 0L2.6 2.2L0 4.4Z" fill="#217346"/></svg>
<div class="r" style="left:43.20px;top:379.30px;width:0.60px;height:9.00px;background:#b8b8b8;"></div>
<div class="r" style="left:112.40px;top:379.30px;width:0.60px;height:9.00px;background:#b8b8b8;"></div>
<div class="r" style="left:165.10px;top:379.30px;width:0.60px;height:9.00px;background:#b8b8b8;"></div>
<div class="r" style="left:231.30px;top:379.30px;width:0.60px;height:9.00px;background:#b8b8b8;"></div>
<div class="t" style="top:378.07px;font-size:7.300px;transform:scaleX(0.9880);transform-origin:0 0;color:#505050;left:49.30px;">Table of Contents</div>
<div class="t" style="top:378.07px;font-size:7.300px;transform:scaleX(0.9620);transform-origin:0 0;color:#505050;left:118.00px;">Assumptions</div>
<div class="t" style="top:378.07px;font-size:7.300px;transform:scaleX(0.9300);transform-origin:0 0;color:#505050;left:170.70px;">Revenue Analysis</div>
<div class="t" style="top:378.07px;font-size:7.300px;transform:scaleX(0.9830);transform-origin:0 0;color:#505050;left:238.40px;">Supporting Details</div>
<div class="r" style="left:304.60px;top:378.40px;width:79.40px;height:11.10px;background:#fff;"></div>
<div class="r" style="left:304.00px;top:378.00px;width:0.60px;height:11.80px;background:#c8c8c8;"></div>
<div class="r" style="left:304.60px;top:387.90px;width:79.40px;height:0.90px;background:#217346;"></div>
<div class="t" style="top:378.07px;font-size:7.300px;transform:scaleX(0.9400);transform-origin:0 0;font-weight:bold;color:#217346;left:310.00px;">Financial Statements</div>
<div class="r" style="left:383.70px;top:378.00px;width:0.60px;height:11.80px;background:#c8c8c8;"></div>
<div style="position:absolute;left:384.3px;top:377.5px;width:65.2px;height:12px;overflow:hidden">
<div class="t" style="top:0.57px;font-size:7.300px;transform:scaleX(0.9650);transform-origin:0 0;color:#505050;left:6.30px;">Fund Sources Trac</div>
</div>
<div class="r" style="left:452.20px;top:385.40px;width:1.10px;height:0.90px;background:#62a07c;"></div>
<div class="r" style="left:454.50px;top:385.40px;width:1.10px;height:0.90px;background:#62a07c;"></div>
<div class="r" style="left:456.80px;top:385.40px;width:1.10px;height:0.90px;background:#62a07c;"></div>
<svg style="position:absolute;left:463px;top:380px" width="9" height="9"><circle cx="4.4" cy="4.4" r="3.7" stroke="#777" stroke-width="0.6" fill="none"/><path d="M4.4 2.3V6.5M2.3 4.4H6.5" stroke="#777" stroke-width="0.6"/></svg>
<div class="r" style="left:478.80px;top:380.50px;width:0.80px;height:0.80px;background:#aaa;"></div>
<div class="r" style="left:478.80px;top:383.50px;width:0.80px;height:0.80px;background:#aaa;"></div>
<div class="r" style="left:478.80px;top:386.50px;width:0.80px;height:0.80px;background:#aaa;"></div>
<div class="r" style="left:486.00px;top:380.00px;width:8.00px;height:8.30px;background:#fff;box-shadow:0 0 0 0.4px #bcbcbc;"></div>
<svg style="position:absolute;left:489px;top:382.2px" width="3" height="5"><path d="M2.5 0L0 2.2L2.5 4.4Z" fill="#222"/></svg>
<div class="r" style="left:571.50px;top:379.20px;width:209.50px;height:10.00px;background:#f0f0f0;"></div>
<div class="r" style="left:498.50px;top:380.00px;width:72.00px;height:8.30px;background:#fff;box-shadow:0 0 0 0.5px #b4b4b4;border-radius:1px;"></div>
<div class="r" style="left:781.50px;top:380.00px;width:8.50px;height:8.30px;background:#fff;box-shadow:0 0 0 0.5px #7fb08f;"></div>
<svg style="position:absolute;left:784.8px;top:382.2px" width="3" height="5"><path d="M0 0L2.5 2.2L0 4.4Z" fill="#222"/></svg>
<div class="r" style="left:0.00px;top:390.50px;width:800.00px;height:11.50px;background:#f3f3f3;"></div>
<div class="t" style="top:391.68px;font-size:6.400px;transform:scaleX(0.7900);transform-origin:0 0;color:#606060;left:4.00px;">Ready</div>
<svg style="position:absolute;left:28px;top:392px" width="11" height="10"><path d="M4.6 1.3A3.2 3.2 0 1 0 3.6 7.8" stroke="#666" stroke-width="0.8" fill="none" stroke-dasharray="1.3 0.8"/><circle cx="7.2" cy="3.0" r="0.8" fill="#444"/><path d="M5.6 4.4L8.9 8.2M8.7 4.4L5.2 8.2M5.4 4.3H9" stroke="#3a3a3a" stroke-width="0.8" fill="none"/></svg>
<div class="t" style="top:391.68px;font-size:6.400px;transform:scaleX(0.8300);transform-origin:0 0;font-weight:bold;color:#333;left:38.10px;">Accessibility: Investigate</div>
<svg style="position:absolute;left:587px;top:391.5px" width="10" height="10"><rect x="1" y="1" width="7.5" height="5.2" fill="#5a5a5a"/><rect x="1" y="1" width="7.5" height="1.3" fill="#333"/><circle cx="6.8" cy="6.4" r="2.2" fill="#f3f3f3"/><circle cx="6.8" cy="6.4" r="1.5" fill="none" stroke="#333" stroke-width="0.9"/><circle cx="3.3" cy="8" r="0.5" fill="#333"/></svg>
<div class="t" style="top:391.68px;font-size:6.400px;transform:scaleX(0.8300);transform-origin:0 0;color:#444;left:597.20px;">Display Settings</div>
<div class="r" style="left:644.80px;top:391.00px;width:21.00px;height:11.00px;background:#d4d4d4;"></div>
<svg style="position:absolute;left:651px;top:392px" width="9" height="9"><path d="M1 1H8V8H1ZM1 3.33H8M1 5.67H8M3.33 1V8M5.67 1V8" stroke="#8a8a8a" stroke-width="0.65" fill="none"/></svg>
<svg style="position:absolute;left:671.5px;top:392px" width="9" height="9"><rect x="1" y="1" width="7" height="7" rx="0.8" stroke="#8a8a8a" stroke-width="0.65" fill="none"/><path d="M3 2.2V6.8H6V2.2Z" stroke="#8a8a8a" stroke-width="0.65" fill="none"/></svg>
<svg style="position:absolute;left:692.5px;top:392px" width="9" height="9"><rect x="1" y="1" width="7" height="7" rx="0.8" stroke="#8a8a8a" stroke-width="0.65" fill="none"/><path d="M3.3 1V4.5M5.5 1V4.5M1 4.5H8" stroke="#8a8a8a" stroke-width="0.65" fill="none"/></svg>
<div class="r" style="left:710.30px;top:395.70px;width:4.00px;height:0.70px;background:#9a9a9a;"></div>
<div class="r" style="left:717.50px;top:395.80px;width:51.50px;height:0.50px;background:#888;"></div>
<div class="r" style="left:738.50px;top:393.00px;width:2.00px;height:6.00px;background:#333;"></div>
<div class="r" style="left:742.60px;top:395.20px;width:0.80px;height:2.50px;background:#666;"></div>
<div class="r" style="left:771.50px;top:395.80px;width:4.00px;height:0.70px;background:#888;"></div>
<div class="r" style="left:773.15px;top:394.10px;width:0.70px;height:4.10px;background:#888;"></div>
<div class="t" style="top:391.68px;font-size:6.400px;transform:scaleX(0.8500);transform-origin:0 0;color:#606060;left:782.20px;">85%</div>
</body></html>
